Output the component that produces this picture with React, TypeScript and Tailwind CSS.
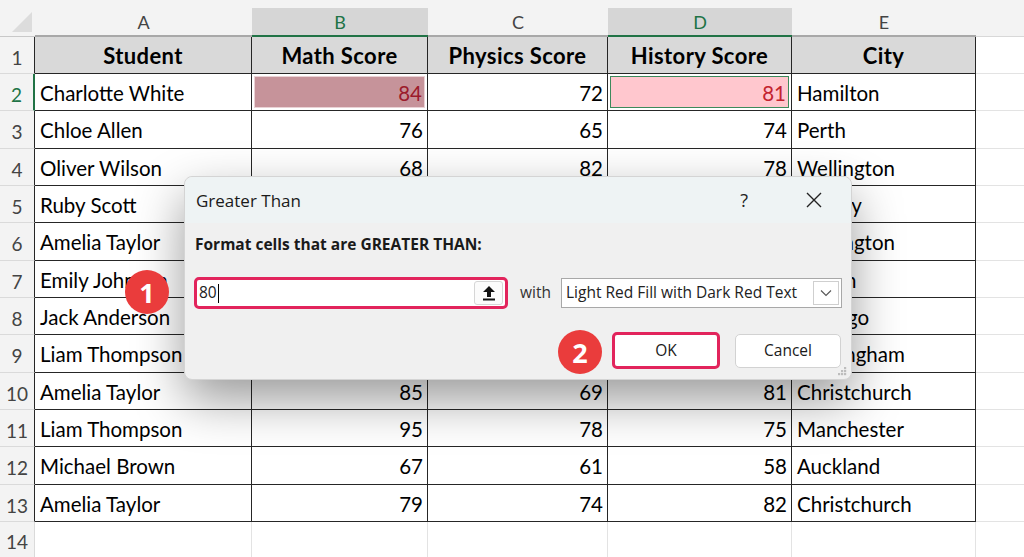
import React from 'react';

const colWidths = ['w-[217px]', 'w-[176px]', 'w-[180px]', 'w-[184px]', 'w-[184px]'];
const letters = ['A', 'B', 'C', 'D', 'E'];

type Row = [string, string, string, string, string];

const rows: Row[] = [
  ['Student', 'Math Score', 'Physics Score', 'History Score', 'City'],
  ['Charlotte White', '84', '72', '81', 'Hamilton'],
  ['Chloe Allen', '76', '65', '74', 'Perth'],
  ['Oliver Wilson', '68', '82', '78', 'Wellington'],
  ['Ruby Scott', '90', '71', '66', 'Sydney'],
  ['Amelia Taylor', '73', '88', '79', 'Wellington'],
  ['Emily Johnson', '81', '64', '85', 'Dublin'],
  ['Jack Anderson', '59', '77', '70', 'Chicago'],
  ['Liam Thompson', '88', '83', '62', 'Birmingham'],
  ['Amelia Taylor', '85', '69', '81', 'Christchurch'],
  ['Liam Thompson', '95', '78', '75', 'Manchester'],
  ['Michael Brown', '67', '61', '58', 'Auckland'],
  ['Amelia Taylor', '79', '74', '82', 'Christchurch'],
];

function rowHeight(i: number) {
  return i % 3 === 2 ? 'h-[38px]' : 'h-[37px]';
}

function DataCell({ value, col, row }: { value: string; col: number; row: number }) {
  const numeric = col >= 1 && col <= 3;
  const base = `${colWidths[col]} shrink-0 border-r border-b border-[#262626] flex items-center pt-[2px] overflow-hidden whitespace-nowrap`;

  if (row === 0) {
    return (
      <div className={`${base} justify-center bg-[#d9d9d9] font-bold text-[22px] tracking-[0.4px] text-black`}>
        {value}
      </div>
    );
  }
  if (row === 1 && col === 1) {
    return (
      <div className={`${base} p-[2px]`}>
        <div className="w-full h-full bg-[#c6939a] border border-[#ead2d5] flex items-center justify-end pr-[2px] pt-[2px] text-[#9c1b2b]">
          {value}
        </div>
      </div>
    );
  }
  if (row === 1 && col === 3) {
    return (
      <div className={`${base} p-[2px]`}>
        <div className="w-full h-full bg-[#ffc7ce] border border-[#3c8a5c] flex items-center justify-end pr-[2px] pt-[2px] text-[#c3232f]">
          {value}
        </div>
      </div>
    );
  }
  return (
    <div className={`${base} ${numeric ? 'justify-end pr-[4px]' : 'pl-[5px]'} text-black`}>
      {value}
    </div>
  );
}

function UploadArrow() {
  return (
    <svg width="14" height="16" viewBox="0 0 14 16">
      <path d="M7 1 L13 7 H9 V12 H5 V7 H1 Z" fill="#111" />
      <rect x="1" y="13.5" width="12" height="2" fill="#111" />
    </svg>
  );
}

function Badge({ n, className }: { n: string; className: string }) {
  return (
    <div
      className={`absolute w-[44px] h-[44px] rounded-full bg-[#ea3c3c] text-white font-bold text-[27px] flex items-center justify-center ${className}`}
      style={{ fontFamily: '"Open Sans", sans-serif' }}
    >
      {n}
    </div>
  );
}

function Dialog() {
  return (
    <div
      className="absolute left-[184px] top-[176px] w-[668px] h-[204px] rounded-[8px] bg-[#f0f0f0] border border-[#d4d4d4] shadow-[0_20px_50px_rgba(0,0,0,0.4)] flex flex-col text-[#1a1a1a]"
      style={{ fontFamily: '"Open Sans", sans-serif' }}
    >
      <div className="h-[46px] shrink-0 rounded-t-[8px] bg-[#eef3f4] flex items-center pl-[11px]">
        <span className="text-[17px]">Greater Than</span>
        <span className="ml-auto text-[18px] text-[#222] mr-[57px]">?</span>
        <svg width="18" height="18" viewBox="0 0 18 18" className="mr-[28px]">
          <path d="M2 2 L16 16 M16 2 L2 16" stroke="#222" strokeWidth="1.4" />
        </svg>
      </div>
      <div className="flex flex-col px-[9px]">
        <div className="mt-[12px] h-[20px] pl-[1px] flex items-center text-[15.5px] font-bold">
          Format cells that are GREATER THAN:
        </div>
        <div className="mt-[22px] flex items-center h-[32px]">
          <div className="w-[314px] h-[32px] rounded-[5px] border-[3px] border-[#e2245c] bg-white flex items-center pl-[2px] pr-[2px]">
            <span className="text-[15.5px] text-[#222]">80</span>
            <span className="w-px h-[19px] bg-black ml-px" />
            <div className="ml-auto w-[29px] h-[24px] rounded-[3px] border border-[#d6d6d6] bg-[#fbfbfb] flex items-center justify-center">
              <UploadArrow />
            </div>
          </div>
          <span className="ml-[12px] text-[15.5px] text-[#333]">with</span>
          <div className="ml-auto w-[281px] h-[30px] border border-[#a8a8a8] bg-white flex items-center pl-[4px] pr-[2px]">
            <span className="text-[15.5px] text-[#222]">Light Red Fill with Dark Red Text</span>
            <div className="ml-auto w-[26px] h-[24px] border border-[#cfcfcf] flex items-center justify-center">
              <svg width="12" height="8" viewBox="0 0 12 8">
                <path d="M1 1.5 L6 6.5 L11 1.5" stroke="#555" strokeWidth="1.1" fill="none" />
              </svg>
            </div>
          </div>
        </div>
        <div className="mt-[23px] flex items-center justify-end pr-[1px] gap-[15px]">
          <div className="w-[108px] h-[37px] rounded-[5px] border-[3px] border-[#e2245c] bg-white flex items-center justify-center text-[15.5px]">
            OK
          </div>
          <div className="w-[106px] h-[34px] rounded-[5px] border border-[#d2d2d2] bg-white flex items-center justify-center text-[15.5px]">
            Cancel
          </div>
        </div>
      </div>
      <svg width="10" height="10" viewBox="0 0 10 10" className="absolute right-[4px] bottom-[3px]">
        <rect x="7" y="1" width="2.2" height="2.2" fill="#bdbdbd" />
        <rect x="4" y="4" width="2.2" height="2.2" fill="#bdbdbd" />
        <rect x="7" y="4" width="2.2" height="2.2" fill="#bdbdbd" />
        <rect x="1" y="7" width="2.2" height="2.2" fill="#bdbdbd" />
        <rect x="4" y="7" width="2.2" height="2.2" fill="#bdbdbd" />
        <rect x="7" y="7" width="2.2" height="2.2" fill="#bdbdbd" />
      </svg>
    </div>
  );
}

export default function App() {
  return (
    <div
      className="relative w-[1024px] h-[557px] overflow-hidden bg-white text-[20.5px] leading-none"
      style={{ fontFamily: 'Lato, "Liberation Sans", sans-serif' }}
    >
      {/* column letters */}
      <div className="flex h-[37px] bg-[#f3f3f3]">
        <div className="w-[35px] shrink-0 flex items-start justify-end pt-[12px] pr-[3px] border-b border-[#c8c8c8]">
          <div className="w-0 h-0 border-l-[20px] border-l-transparent border-b-[20px] border-b-[#dcdcdc]" />
        </div>
        {letters.map((l, i) => {
          const sel = i === 1 || i === 3;
          return (
            <div key={l} className={`${colWidths[i]} shrink-0 flex flex-col justify-end`}>
              <div
                className={`h-[29px] flex items-center justify-center text-[18px] border-b-2 ${
                  sel ? 'bg-[#d6d6d6] text-[#217346] border-[#217346]' : 'text-[#444] border-[#a8a8a8]'
                }`}
              >
                {l}
              </div>
            </div>
          );
        })}
        <div className="flex-1 border-b border-[#d8d8d8]" />
      </div>

      {rows.map((r, ri) => (
        <div key={ri} className={`flex ${rowHeight(ri)}`}>
          <div
            className={`w-[35px] shrink-0 bg-[#f3f3f3] border-b border-[#dadada] flex items-center justify-center pt-[4px] text-[19px] ${
              ri === 1 ? 'text-[#217346] border-r-2 border-r-[#217346]' : 'text-[#444] border-r border-r-[#262626]'
            }`}
          >
            {ri + 1}
          </div>
          {r.map((v, ci) => (
            <DataCell key={ci} value={v} col={ci} row={ri} />
          ))}
          <div className="flex-1 border-b border-[#e3e3e3]" />
        </div>
      ))}

      {/* row 14 */}
      <div className="flex h-[35px]">
        <div className="w-[35px] shrink-0 bg-[#f3f3f3] border-r border-[#dadada] flex items-center justify-center pt-[4px] text-[19px] text-[#444]">
          14
        </div>
        {colWidths.map((w, i) => (
          <div key={i} className={`${w} shrink-0 border-r border-[#e3e3e3]`} />
        ))}
        <div className="flex-1" />
      </div>

      <Dialog />
      <Badge n="1" className="left-[125px] top-[270px]" />
      <Badge n="2" className="left-[558px] top-[330px]" />
    </div>
  );
}
